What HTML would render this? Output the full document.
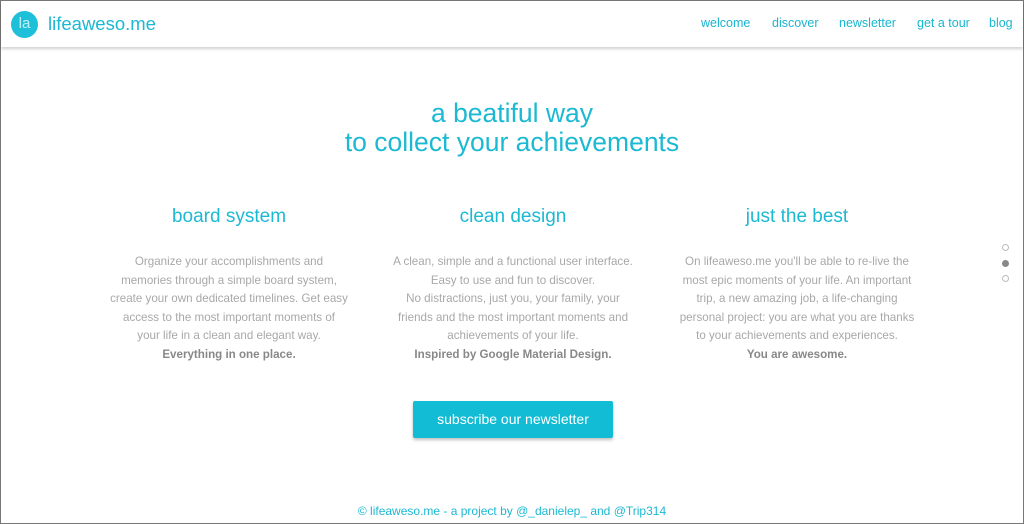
<!DOCTYPE html>
<html><head><meta charset="utf-8"><style>
*{margin:0;padding:0;box-sizing:border-box}
body{width:1024px;height:524px;overflow:hidden;background:#fff;font-family:"Liberation Sans",sans-serif;position:relative;border:1px solid #777;}
.hdr{position:absolute;left:0;top:0;width:1022px;height:46px;background:#fff;box-shadow:0 2px 3px rgba(0,0,0,.18)}
.logo{position:absolute;left:10px;top:10px;width:27px;height:27px;border-radius:50%;background:#1ec0d9;color:#bff0f7;font-size:15px;text-align:center;line-height:25px}
.brand{position:absolute;left:47px;top:12px;font-size:18.5px;color:#1bb8d3}
.nav{position:absolute;top:15px;font-size:12.5px;color:#19b5cf}
.c{color:#1cb9d3;text-align:center;position:absolute}
h1{position:absolute;left:0;width:1022px;text-align:center;font-weight:normal;font-size:26.5px;color:#1cb9d3;line-height:29px;top:98px}
.t{font-size:19px;top:205px;width:280px}
.p{top:252px;width:280px;font-size:11.6px;line-height:18.6px;color:#a8a8a8}
.p b{color:#888}
.btn{position:absolute;left:412px;top:400px;width:200px;height:37px;background:#12bcd4;color:#fff;font-size:14px;text-align:center;line-height:37px;box-shadow:0 2px 3px rgba(0,0,0,.25);border-radius:2px}
.dot{position:absolute;left:1001px;width:7px;height:7px;border-radius:50%;border:1px solid #bbb}
</style></head><body>
<div class="hdr">
<div class="logo">la</div><div class="brand">lifeaweso.me</div>
<div class="nav" style="left:700px">welcome</div>
<div class="nav" style="left:771px">discover</div>
<div class="nav" style="left:838px">newsletter</div>
<div class="nav" style="left:916px">get a tour</div>
<div class="nav" style="left:988px">blog</div>
</div>
<h1>a beatiful way<br>to collect your achievements</h1>
<div class="c t" style="left:88px">board system</div>
<div class="c t" style="left:372px">clean design</div>
<div class="c t" style="left:656px">just the best</div>
<div class="c p" style="left:88px">Organize your accomplishments and<br>memories through a simple board system,<br>create your own dedicated timelines. Get easy<br>access to the most important moments of<br>your life in a clean and elegant way.<br><b>Everything in one place.</b></div>
<div class="c p" style="left:372px">A clean, simple and a functional user interface.<br>Easy to use and fun to discover.<br>No distractions, just you, your family, your<br>friends and the most important moments and<br>achievements of your life.<br><b>Inspired by Google Material Design.</b></div>
<div class="c p" style="left:656px">On lifeaweso.me you'll be able to re-live the<br>most epic moments of your life. An important<br>trip, a new amazing job, a life-changing<br>personal project: you are what you are thanks<br>to your achievements and experiences.<br><b>You are awesome.</b></div>
<div class="btn">subscribe our newsletter</div>
<div class="dot" style="top:243px"></div>
<div class="dot" style="top:259px;background:#888;border-color:#888"></div>
<div class="dot" style="top:274px"></div>
<div class="c" style="left:0;width:1022px;top:503px;font-size:12px">© lifeaweso.me - a project by @_danielep_ and @Trip314</div>
</body></html>
